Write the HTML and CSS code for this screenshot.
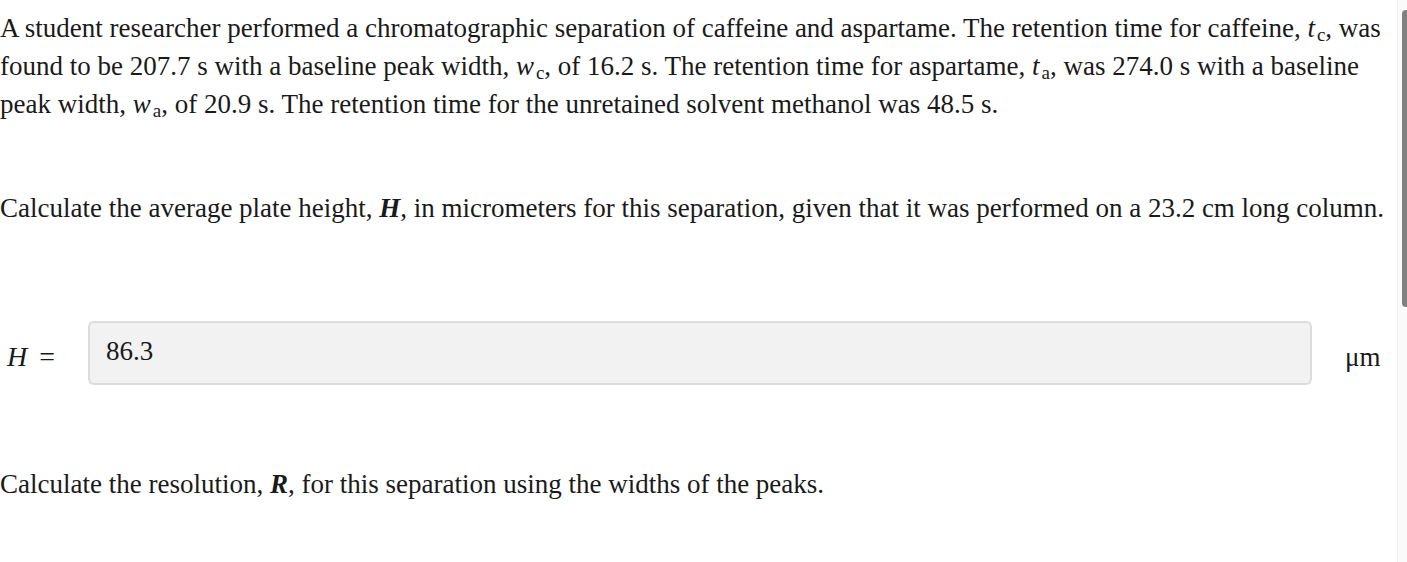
FILE: index.html
```html
<!DOCTYPE html>
<html lang="en">
<head>
<meta charset="utf-8">
<title>Chromatographic separation</title>
<link rel="stylesheet" href="styles.css">
</head>
<body>
<div class="page">
  <main class="content">
    <p class="intro">A student researcher performed a chromatographic separation of caffeine and aspartame. The retention time for caffeine, <span class="var">t</span><sub>c</sub>, was found to be 207.7&nbsp;s with a baseline peak width, <span class="var">w</span><sub>c</sub>, of 16.2&nbsp;s. The retention time for aspartame, <span class="var">t</span><sub>a</sub>, was 274.0&nbsp;s with a baseline peak width, <span class="var">w</span><sub>a</sub>, of 20.9&nbsp;s. The retention time for the unretained solvent methanol was 48.5&nbsp;s.</p>

    <p class="question">Calculate the average plate height, <b class="bvar">H</b>, in micrometers for this separation, given that it was performed on a 23.2&nbsp;cm long column.</p>

    <div class="answer-row">
      <label class="answer-label" for="plate-height"><span class="var">H</span> <span class="eq">=</span></label>
      <input class="answer-input" id="plate-height" type="text" value="86.3">
      <span class="unit">μm</span>
    </div>

    <p class="question last">Calculate the resolution, <b class="bvar">R</b>, for this separation using the widths of the peaks.</p>
  </main>
  <div class="scrolltrack"><div class="scrollthumb"></div></div>
</div>
</body>
</html>
```

FILE: styles.css
```css
html, body {
  margin: 0;
  padding: 0;
  background: #ffffff;
}

body {
  font-family: "Liberation Serif", "Times New Roman", serif;
  font-size: 27px;
  color: #1a1a1a;
}

.page {
  display: flex;
  height: 562px;
  overflow: hidden;
}

.content {
  flex: 1;
  padding-right: 10px;
}

p {
  margin: 0;
  line-height: 38px;
}

.intro {
  padding-top: 9px;
}

.question {
  margin-top: 66px;
}

.question.last {
  margin-top: 80px;
}

.var {
  font-style: italic;
}

.bvar {
  font-style: italic;
  font-weight: bold;
}

sub {
  font-size: 19px;
  line-height: 0;
  vertical-align: -4px;
  margin-left: 2px;
}

.answer-row {
  display: flex;
  align-items: center;
  margin-top: 94px;
  height: 64px;
}

.answer-label {
  width: 88px;
  padding-left: 7px;
  padding-top: 8px;
  box-sizing: border-box;
  font-size: 28px;
}

.answer-label .eq {
  margin-left: 5px;
}

.answer-input {
  width: 1224px;
  height: 64px;
  box-sizing: border-box;
  border: 2px solid #dcdcdc;
  border-radius: 6px;
  background: #f2f2f2;
  font-family: "Liberation Serif", "Times New Roman", serif;
  font-size: 27px;
  color: #1a1a1a;
  padding: 0 16px 4px;
  outline: none;
}

.unit {
  margin-left: 33px;
  padding-top: 8px;
}

.scrolltrack {
  width: 10px;
  flex: none;
  background: #fafafa;
  border-left: 1px solid #f0f0f0;
  padding-top: 10px;
  box-sizing: border-box;
}

.scrollthumb {
  margin-left: 4px;
  height: 297px;
  background: #808080;
  border-radius: 4px 0 0 4px;
}
```
